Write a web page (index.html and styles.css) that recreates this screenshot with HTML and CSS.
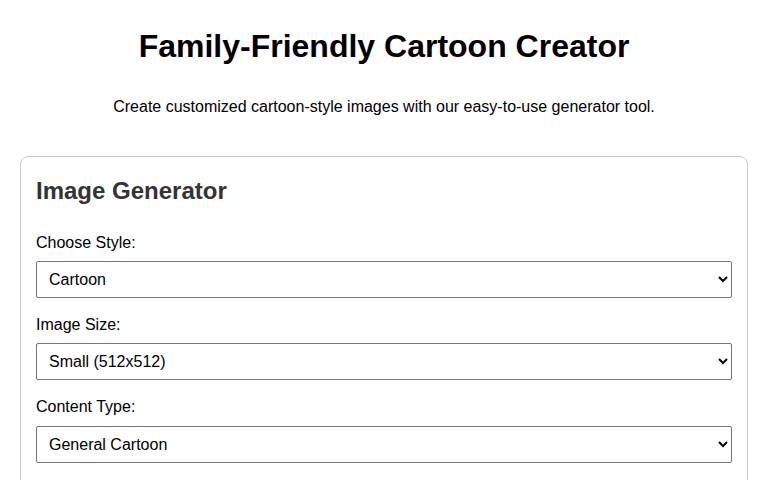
FILE: index.html
```html
<!DOCTYPE html>
<html>
<head>
<meta charset="utf-8">
<link rel="stylesheet" href="styles.css">
</head>
<body>
<div class="page">
  <h1 class="title">Family-Friendly Cartoon Creator</h1>
  <p class="intro">Create customized cartoon-style images with our easy-to-use generator tool.</p>
  <div class="card">
    <h2 class="card-title">Image Generator</h2>
    <div class="group">
      <label class="label" for="style">Choose Style:</label>
      <select class="select" id="style">
        <option>Cartoon</option>
        <option>Anime</option>
        <option>Watercolor</option>
      </select>
    </div>
    <div class="group">
      <label class="label" for="size">Image Size:</label>
      <select class="select" id="size">
        <option>Small (512x512)</option>
        <option>Medium (768x768)</option>
        <option>Large (1024x1024)</option>
      </select>
    </div>
    <div class="group">
      <label class="label" for="type">Content Type:</label>
      <select class="select" id="type">
        <option>General Cartoon</option>
        <option>Animals</option>
        <option>Landscapes</option>
      </select>
    </div>
  </div>
</div>
</body>
</html>
```
FILE: styles.css
```css
html, body {
  margin: 0;
  padding: 0;
  background: #fff;
}
body {
  font-family: "Liberation Sans", Arial, sans-serif;
  color: #000;
}
.page {
  padding: 28px 20px 20px;
}
.title {
  font-size: 32px;
  font-weight: bold;
  text-align: center;
  margin: 0 0 32px;
  line-height: 37px;
}
.intro {
  font-size: 16px;
  text-align: center;
  margin: 0 0 39px;
  line-height: 20px;
}
.card {
  border: 1px solid #ccc;
  border-radius: 8px;
  padding: 20px 15px;
}
.card-title {
  font-size: 24px;
  font-weight: bold;
  color: #333;
  margin: 0 0 28.5px;
  line-height: 28px;
}
.group {
  display: flex;
  flex-direction: column;
  margin-bottom: 18px;
}
.label {
  display: block;
  font-size: 16px;
  line-height: 18.4px;
  margin-bottom: 9px;
}
.select {
  width: 100%;
  height: 37px;
  box-sizing: border-box;
  padding: 0 8px;
  font-family: "Liberation Sans", Arial, sans-serif;
  font-size: 16px;
  border: 1px solid #767676;
  border-radius: 2px;
  background: #fff;
  color: #000;
}
```
